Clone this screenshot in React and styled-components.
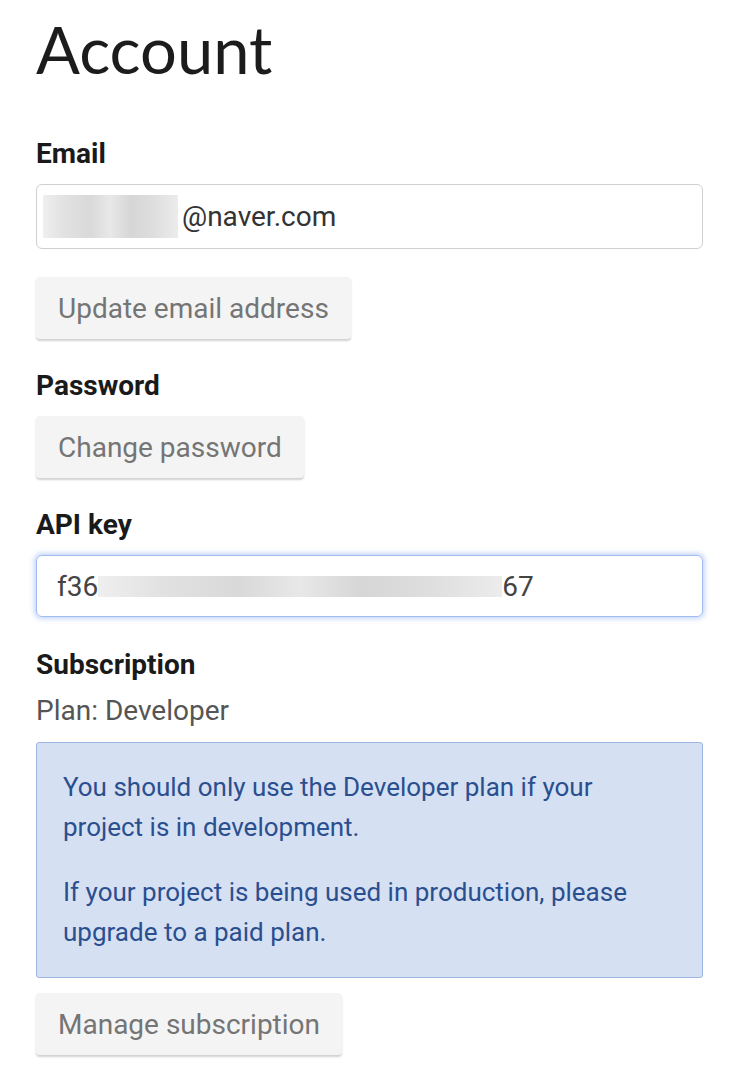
import React from 'react'
import styled, { createGlobalStyle, css } from 'styled-components'

const GlobalStyle = createGlobalStyle`
  body {
    margin: 0;
    background: #fff;
    font-family: Roboto, "Liberation Sans", Arial, sans-serif;
  }
`

const Page = styled.div`
  padding: 11px 37px 20px 36px;
  display: flex;
  flex-direction: column;
`

const Title = styled.h1`
  margin: 0 0 50px 0;
  font-family: Lato, "Open Sans", sans-serif;
  font-weight: 400;
  font-size: 65px;
  line-height: 77px;
  color: #1c1c1c;
`

const Label = styled.h3`
  margin: 0 0 14px 0;
  font-size: 28px;
  line-height: 32px;
  font-weight: 700;
  color: #1a1a1a;
`

const Field = styled.div`
  display: flex;
  align-items: center;
  height: 65px;
  box-sizing: border-box;
  padding: 0 20px;
  border: 1px solid #cfcfcf;
  border-radius: 6px;
  font-size: 28px;
  color: #333;
  margin-bottom: 28px;
  ${(p) =>
    p.$focused &&
    css`
      height: 62px;
      margin-bottom: 32px;
      border-color: #9fbbf0;
      box-shadow: 0 0 5px 2px rgba(130, 165, 240, 0.45);
      color: #444;
    `}
`

const Blur = styled.span`
  display: inline-block;
  flex: none;
  width: ${(p) => p.$w}px;
  height: ${(p) => p.$h}px;
  margin: 0 ${(p) => p.$mr || 0}px 0 ${(p) => p.$ml || 0}px;
  background: linear-gradient(
    90deg,
    #efefef 0%,
    #e2e2e2 15%,
    #d9d9d9 35%,
    #e8e8e8 50%,
    #d6d6d6 65%,
    #dedede 82%,
    #ececec 100%
  );
`

const Button = styled.button`
  align-self: flex-start;
  height: 62px;
  padding: 0 22px;
  border: none;
  border-radius: 4px;
  background: #f4f4f4;
  box-shadow: 0 2px 2px rgba(0, 0, 0, 0.18);
  font-family: Roboto, "Liberation Sans", sans-serif;
  font-size: 28px;
  color: #757575;
  margin-bottom: ${(p) => p.$mb ?? 31}px;
`

const Plan = styled.div`
  font-size: 28px;
  line-height: 32px;
  color: #555;
  margin-bottom: 15px;
`

const Notice = styled.div`
  background: #d6e0f3;
  border: 1px solid #9cb7e2;
  border-radius: 3px;
  padding: 24px 26px 25px 26px;
  color: #2a4f8f;
  font-size: 26px;
  line-height: 40px;
  margin-bottom: 15px;

  p {
    margin: 0;
  }
  p + p {
    margin-top: 25px;
  }
`

export default function App() {
  return (
    <>
      <GlobalStyle />
      <Page>
        <Title>Account</Title>

        <Label>Email</Label>
        <Field>
          <Blur $w={135} $h={43} $ml={-14} $mr={4} />
          <span>@naver.com</span>
        </Field>
        <Button>Update email address</Button>

        <Label>Password</Label>
        <Button>Change password</Button>

        <Label>API key</Label>
        <Field $focused>
          <span>f36</span>
          <Blur $w={404} $h={21} />
          <span>67</span>
        </Field>

        <Label>Subscription</Label>
        <Plan>Plan: Developer</Plan>
        <Notice>
          <p>You should only use the Developer plan if your project is in development.</p>
          <p>If your project is being used in production, please upgrade to a paid plan.</p>
        </Notice>
        <Button $mb={0}>Manage subscription</Button>
      </Page>
    </>
  )
}
